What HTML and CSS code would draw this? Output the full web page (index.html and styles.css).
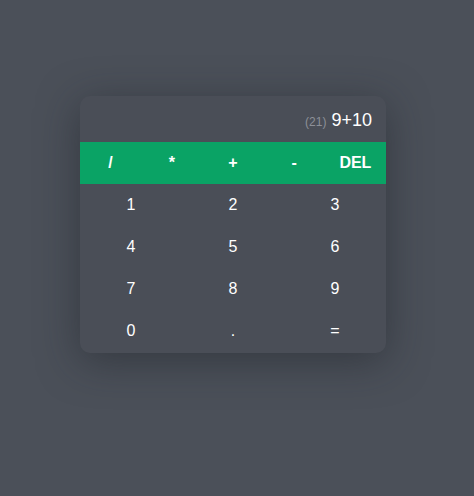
FILE: index.html
```html
<!DOCTYPE html>
<html lang="en">
<head>
  <meta charset="UTF-8" />
  <title>Calculator</title>
  <meta name="viewport" content="width=device-width, initial-scale=1.0" />
  <link rel="stylesheet" href="styles.css">
</head>
<body>
  <div class="calculator">
    <!-- Display: result in brackets, then the current expression -->
    <div class="display">
      <span class="result">(21)</span>
      <span class="expression">9+10</span>
    </div>

    <!-- Operators -->
    <div class="operators">
      <button>/</button>
      <button>*</button>
      <button>+</button>
      <button>-</button>
      <button>DEL</button>
    </div>

    <!-- Digits -->
    <div class="digits">
      <button>1</button>
      <button>2</button>
      <button>3</button>
      <button>4</button>
      <button>5</button>
      <button>6</button>
      <button>7</button>
      <button>8</button>
      <button>9</button>
      <button>0</button>
      <button>.</button>
      <button>=</button>
    </div>
  </div>
</body>
</html>
```

FILE: styles.css
```css
* {
  box-sizing: border-box;
}

body {
  margin: 0;
  min-height: 100vh;
  background: #4b5059;
  font-family: "Liberation Sans", Arial, sans-serif;
  padding-top: 96px;
  padding-left: 80px;
}

.calculator {
  width: 306px;
  background: #4a4e57;
  border-radius: 10px;
  overflow: hidden;
  box-shadow: 0 8px 40px rgba(30, 33, 40, 0.5);
}

.display {
  height: 46px;
  display: flex;
  align-items: center;
  justify-content: flex-end;
  padding: 3px 14px 0 0;
  color: #fff;
}

.result {
  font-size: 12px;
  color: #8d9098;
  margin-right: 5px;
  padding-top: 3px;
}

.expression {
  font-size: 18px;
}

button {
  border: none;
  background: none;
  color: #fff;
  font-family: inherit;
  height: 42px;
  padding: 0;
  cursor: pointer;
}

.operators {
  display: grid;
  grid-template-columns: repeat(5, 1fr);
  background: #0aa365;
}

.operators button {
  font-size: 16px;
  font-weight: bold;
}

.digits {
  display: grid;
  grid-template-columns: repeat(3, 1fr);
  padding-bottom: 1px;
}

.digits button {
  font-size: 16px;
}
```
